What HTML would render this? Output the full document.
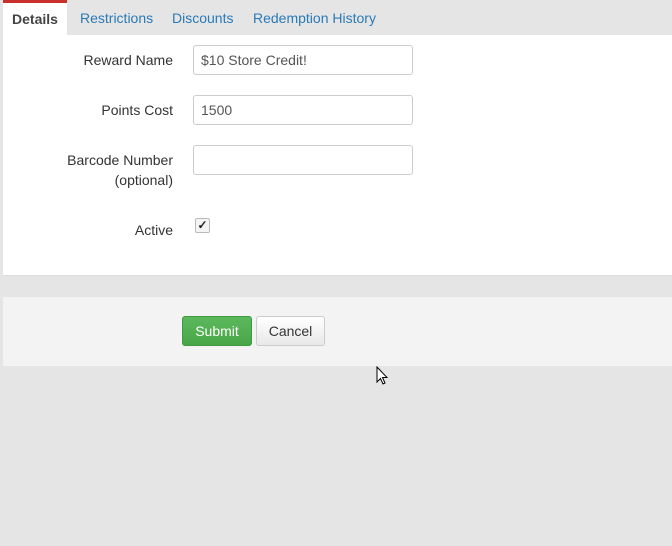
<!DOCTYPE html>
<html><head><style>
body{margin:0;width:672px;height:546px;background:#e5e5e5;font-family:"Liberation Sans",sans-serif;font-size:14px;position:relative;overflow:hidden}
.tab{position:absolute;top:0;height:35px;line-height:36px;color:#2a7ab8;font-size:14px}
.act{left:3px;width:64px;background:#fff;border-top:3px solid #c9302c;box-sizing:border-box;line-height:32px;text-align:center;color:#444;height:36px;font-weight:bold}
.panel{position:absolute;left:3px;top:35px;width:669px;height:240px;background:#fff;border-bottom:1px solid #ddd}
.lbl{position:absolute;right:499px;text-align:right;color:#333;line-height:20px}
.inp{position:absolute;left:193px;width:220px;height:30px;border:1px solid #ccc;border-radius:3px;box-sizing:border-box;background:#fff;padding-left:7px;line-height:28px;color:#555}
.foot{position:absolute;left:3px;top:297px;width:669px;height:69px;background:#f3f3f3}
.btn{position:absolute;top:316px;height:30px;border-radius:3px;box-sizing:border-box;line-height:28px;text-align:center}
</style></head><body>
<div class="tab act">Details</div>
<div class="tab" style="left:80px">Restrictions</div>
<div class="tab" style="left:172px">Discounts</div>
<div class="tab" style="left:253px">Redemption History</div>
<div class="panel"></div>
<div class="lbl" style="top:50px">Reward Name</div>
<div class="inp" style="top:45px">$10 Store Credit!</div>
<div class="lbl" style="top:100px">Points Cost</div>
<div class="inp" style="top:95px">1500</div>
<div class="lbl" style="top:150px">Barcode Number<br>(optional)</div>
<div class="inp" style="top:145px"></div>
<div class="lbl" style="top:220px">Active</div>
<div style="position:absolute;left:195px;top:218px;width:13px;height:13px;border:1px solid #bbb;border-radius:2px;background:#f4f4f4;font-size:12px;line-height:13px;text-align:center;color:#222;font-weight:bold">✓</div>
<div class="foot"></div>
<div class="btn" style="left:182px;width:70px;background:linear-gradient(#5cb85c,#48a648);border:1px solid #3e9a3e;color:#fff">Submit</div>
<div class="btn" style="left:256px;width:69px;background:linear-gradient(#fff,#e8e8e8);border:1px solid #ccc;color:#333">Cancel</div>
<svg style="position:absolute;left:376px;top:366px" width="14" height="20" viewBox="0 0 14 20"><path d="M1 1 L1 16 L4.5 12.5 L7 18 L9 17 L6.5 11.5 L11 11.5 Z" fill="#fff" stroke="#000" stroke-width="1"/></svg>
</body></html>
